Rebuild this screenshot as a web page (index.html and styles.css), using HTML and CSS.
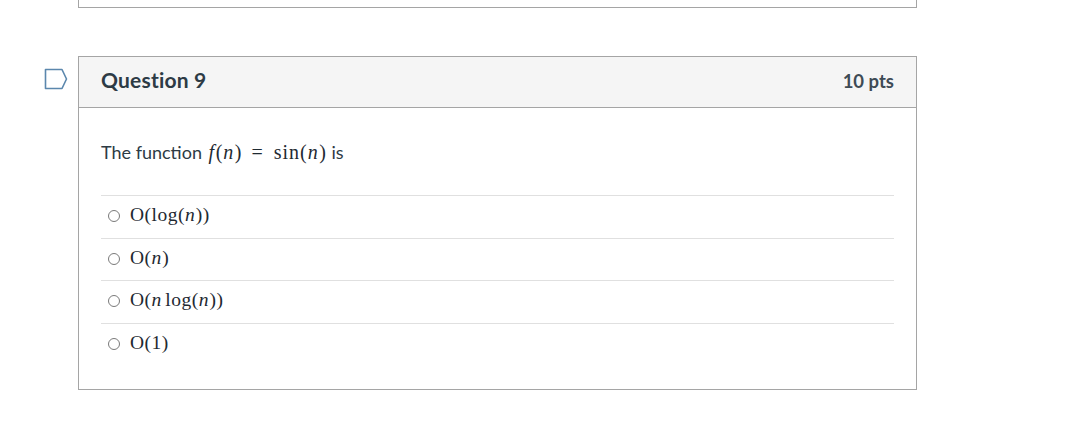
FILE: index.html
```html
<!DOCTYPE html>
<html>
<head>
<meta charset="utf-8">
<link rel="stylesheet" href="styles.css">
</head>
<body>
<div class="page">
  <div class="prev-box"></div>
  <div class="question-row">
    <div class="flag">
      <svg width="24" height="22" viewBox="0 0 24 22"><path d="M1.5 1.5 H18 L22.5 11 L18 20.5 H1.5 Z" fill="none" stroke="#5b87ad" stroke-width="1.6" stroke-linejoin="round"/></svg>
    </div>
    <div class="question">
      <div class="q-header">
        <span class="q-title">Question 9</span>
        <span class="q-pts">10 pts</span>
      </div>
      <div class="q-body">
        <p class="q-text">The function <span class="math inline-math"><i>f</i>(<i>n</i>)<span class="op">=</span>sin(<i>n</i>)</span> is</p>
        <ul class="answers">
          <li class="answer"><span class="radio"></span><span class="math">O(log(<i>n</i>))</span></li>
          <li class="answer"><span class="radio"></span><span class="math">O(<i>n</i>)</span></li>
          <li class="answer"><span class="radio"></span><span class="math">O(<i>n</i><span class="thin"></span>log(<i>n</i>))</span></li>
          <li class="answer"><span class="radio"></span><span class="math">O(1)</span></li>
        </ul>
      </div>
    </div>
  </div>
</div>
</body>
</html>
```
FILE: styles.css
```css
html, body {
  margin: 0;
  padding: 0;
  background: #ffffff;
}
body {
  font-family: Lato, "Liberation Sans", sans-serif;
  color: #2d3b45;
}
.page {
  width: 1091px;
}
.prev-box {
  margin-left: 78px;
  width: 837px;
  height: 7px;
  border: 1px solid #a5a5a5;
  border-top: none;
}
.question-row {
  display: flex;
  margin-top: 48px;
  margin-left: 44px;
}
.flag {
  width: 34px;
  padding-top: 12px;
}
.flag svg {
  display: block;
}
.question {
  width: 837px;
  border: 1px solid #a5a5a5;
}
.q-header {
  height: 44px;
  box-sizing: content-box;
  background: #f5f5f5;
  border-bottom: 1px solid #a5a5a5;
  display: flex;
  align-items: center;
  justify-content: space-between;
  padding: 0 22px 6px 22px;
}
.q-title {
  font-size: 21px;
  font-weight: 700;
  color: #2d3b45;
  letter-spacing: 0.2px;
}
.q-pts {
  font-size: 18.5px;
  font-weight: 700;
  color: #3e4b55;
  margin-top: 4px;
}
.q-body {
  padding: 31px 22px 23px 22px;
}
.q-text {
  margin: 0 0 29px 0;
  font-size: 18px;
  line-height: 27px;
}
.math {
  font-family: "Liberation Serif", "DejaVu Serif", serif;
  font-size: 19.5px;
  letter-spacing: 0.5px;
  color: #1f2a32;
}
.math i {
  font-style: italic;
  letter-spacing: 1px;
}
.inline-math {
  font-size: 20px;
  letter-spacing: 1px;
  margin-left: 2px;
}
.inline-math i {
  letter-spacing: 1.5px;
}
.op {
  margin: 0 9px 0 8px;
}
.inline-math .op {
  margin: 0 10px 0 9px;
}
.thin {
  display: inline-block;
  width: 3px;
}
.answers {
  list-style: none;
  margin: 0;
  padding: 0;
}
.answer {
  display: flex;
  align-items: center;
  height: 37.7px;
  padding-bottom: 4px;
  border-top: 1px solid #e0e0e0;
  padding-left: 7px;
}
.radio {
  width: 12px;
  height: 12px;
  border: 1px solid #7a7a7a;
  border-radius: 50%;
  margin-right: 10px;
  margin-top: 2px;
  box-sizing: border-box;
}
```
